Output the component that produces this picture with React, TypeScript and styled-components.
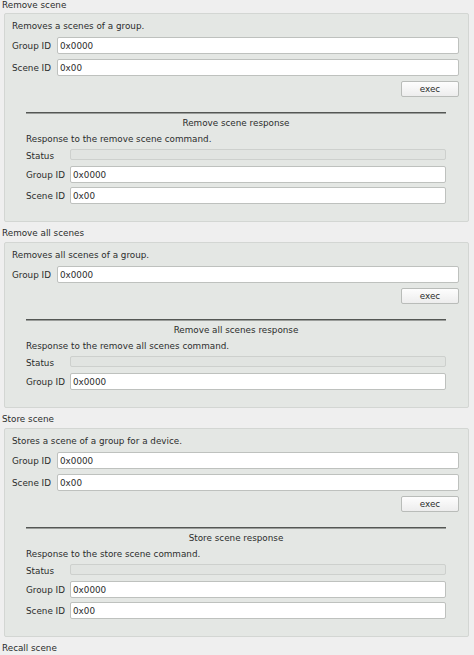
import styled, { createGlobalStyle } from 'styled-components';

const GlobalStyle = createGlobalStyle`
  html, body {
    margin: 0;
    padding: 0;
    background: #efefef;
  }
  body {
    font-family: "DejaVu Sans", Verdana, sans-serif;
    font-size: 8.8px;
    color: #2b2d2c;
    overflow: hidden;
  }
`;

type Field = { label: string; value: string };

type Command = {
  title: string;
  desc: string;
  fields: Field[];
  responseTitle: string;
  responseDesc: string;
  responseFields: Field[];
};

const COMMANDS: Command[] = [
  {
    title: 'Remove scene',
    desc: 'Removes a scenes of a group.',
    fields: [
      { label: 'Group ID', value: '0x0000' },
      { label: 'Scene ID', value: '0x00' },
    ],
    responseTitle: 'Remove scene response',
    responseDesc: 'Response to the remove scene command.',
    responseFields: [
      { label: 'Group ID', value: '0x0000' },
      { label: 'Scene ID', value: '0x00' },
    ],
  },
  {
    title: 'Remove all scenes',
    desc: 'Removes all scenes of a group.',
    fields: [{ label: 'Group ID', value: '0x0000' }],
    responseTitle: 'Remove all scenes response',
    responseDesc: 'Response to the remove all scenes command.',
    responseFields: [{ label: 'Group ID', value: '0x0000' }],
  },
  {
    title: 'Store scene',
    desc: 'Stores a scene of a group for a device.',
    fields: [
      { label: 'Group ID', value: '0x0000' },
      { label: 'Scene ID', value: '0x00' },
    ],
    responseTitle: 'Store scene response',
    responseDesc: 'Response to the store scene command.',
    responseFields: [
      { label: 'Group ID', value: '0x0000' },
      { label: 'Scene ID', value: '0x00' },
    ],
  },
];

const Page = styled.div`
  display: flex;
  flex-direction: column;
  margin-top: -1px;
  padding: 0 5px 0 4px;
`;

const SectionTitle = styled.div<{ $first?: boolean }>`
  line-height: 12px;
  padding: ${(p) => (p.$first ? '0' : '5px')} 0 ${(p) => (p.$first ? '2px' : '3px')} 0;
  margin-left: -2px;
  white-space: nowrap;
`;

const GroupBox = styled.div`
  background: #e4e7e4;
  border: 1px solid #d3d6d3;
  border-radius: 2px;
  padding: 6px 9px 17px 7px;
  display: flex;
  flex-direction: column;
`;

const Form = styled.div`
  display: grid;
  grid-template-columns: auto 1fr;
  column-gap: 6px;
  row-gap: 5px;
  align-items: center;
`;

const Desc = styled.div`
  grid-column: 1 / -1;
  line-height: 12px;
  white-space: nowrap;
`;

const Label = styled.div`
  white-space: nowrap;
  line-height: 12px;
`;

const LineEdit = styled.input`
  box-sizing: border-box;
  height: 17px;
  width: 100%;
  min-width: 0;
  margin: 0;
  padding: 0 2px;
  border: 1px solid #bec1be;
  border-radius: 2px;
  background: #ffffff;
  font-family: inherit;
  font-size: inherit;
  color: #2b2d2c;
  outline: none;
`;

const StatusBox = styled.div`
  box-sizing: border-box;
  height: 11px;
  margin-bottom: 2px;
  border: 1px solid #cdd0cd;
  border-radius: 2px;
  background: #e1e4e1;
`;

const ExecButton = styled.button`
  grid-column: 1 / -1;
  justify-self: end;
  box-sizing: border-box;
  width: 58px;
  height: 16px;
  margin: 0;
  padding: 0;
  border: 1px solid #b9bcb9;
  border-radius: 2px;
  background: linear-gradient(#fdfdfd, #ededed);
  font-family: inherit;
  font-size: inherit;
  color: #2b2d2c;
`;

const Separator = styled.div`
  height: 1px;
  background: #545754;
  box-shadow: 0 1px 0 #9a9d9a;
  margin: 15px 13px 4px 14px;
`;

const Response = styled.div`
  display: grid;
  grid-template-columns: auto 1fr;
  column-gap: 5px;
  row-gap: 4px;
  align-items: center;
  margin: 0 13px 0 14px;
`;

const ResponseTitle = styled.div`
  grid-column: 1 / -1;
  text-align: center;
  line-height: 12px;
  white-space: nowrap;
`;

function FieldRows({ fields }: { fields: Field[] }) {
  return (
    <>
      {fields.map((f) => (
        <>
          <Label key={f.label}>{f.label}</Label>
          <LineEdit key={f.label + '-v'} defaultValue={f.value} />
        </>
      ))}
    </>
  );
}

function CommandSection({ cmd, first }: { cmd: Command; first: boolean }) {
  return (
    <section>
      <SectionTitle $first={first}>{cmd.title}</SectionTitle>
      <GroupBox>
        <Form>
          <Desc>{cmd.desc}</Desc>
          <FieldRows fields={cmd.fields} />
          <ExecButton>exec</ExecButton>
        </Form>
        <Separator />
        <Response>
          <ResponseTitle>{cmd.responseTitle}</ResponseTitle>
          <Desc>{cmd.responseDesc}</Desc>
          <Label>Status</Label>
          <StatusBox />
          <FieldRows fields={cmd.responseFields} />
        </Response>
      </GroupBox>
    </section>
  );
}

export default function App() {
  return (
    <>
      <GlobalStyle />
      <Page>
        {COMMANDS.map((cmd, i) => (
          <CommandSection key={cmd.title} cmd={cmd} first={i === 0} />
        ))}
        <SectionTitle>Recall scene</SectionTitle>
      </Page>
    </>
  );
}
